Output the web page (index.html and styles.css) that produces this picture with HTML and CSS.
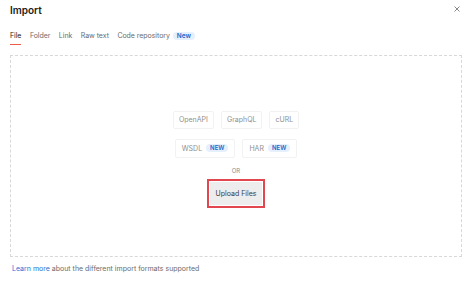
FILE: index.html
```html
<!DOCTYPE html>
<html>
<head>
<meta charset="utf-8">
<link rel="stylesheet" href="styles.css">
</head>
<body>
<div class="dialog">
  <div class="header">
    <div class="title">Import</div>
    <svg class="close" width="6" height="6" viewBox="0 0 6 6"><path d="M0.5 0.5 L5.5 5.5 M5.5 0.5 L0.5 5.5" stroke="#7a7a7a" stroke-width="0.9" fill="none"/></svg>
  </div>
  <div class="tabs">
    <div class="tab active">File</div>
    <div class="tab">Folder</div>
    <div class="tab">Link</div>
    <div class="tab">Raw text</div>
    <div class="tab"><span>Code repository</span><span class="badge">New</span></div>
  </div>
  <div class="dropzone">
    <div class="row">
      <div class="fmt">OpenAPI</div>
      <div class="fmt">GraphQL</div>
      <div class="fmt">cURL</div>
    </div>
    <div class="row row2">
      <div class="fmt"><span>WSDL</span><span class="badge small">NEW</span></div>
      <div class="fmt"><span>HAR</span><span class="badge small">NEW</span></div>
    </div>
    <div class="or">OR</div>
    <div class="highlight"><div class="upload">Upload Files</div></div>
  </div>
  <div class="footer"><span class="link">Learn more</span> about the different import formats supported</div>
</div>
</body>
</html>
```
FILE: styles.css
```css
html, body { margin: 0; padding: 0; background: #ffffff; }
body { font-family: Inter, "Noto Sans", sans-serif; color: #212121; width: 474px; height: 282px; overflow: hidden; }
.dialog { padding: 4px 12px 0 10px; }
.header { display: flex; justify-content: space-between; align-items: flex-start; height: 12px; }
.title { font-size: 10px; line-height: 12px; font-weight: 600; color: #212121; }
.close { margin-top: 2px; margin-right: 2px; }
.tabs { display: flex; gap: 8.5px; margin-top: 15px; align-items: flex-end; }
.tab { font-size: 7px; line-height: 10px; color: #6b6b6b; padding-bottom: 3px; border-bottom: 1.5px solid transparent; display: flex; align-items: center; gap: 3px; letter-spacing: -0.05px; }
.tab.active { color: #212121; border-bottom-color: #ef5b45; }
.badge { display: inline-block; background: #e6f0fc; color: #1d62c7; font-weight: 600; font-size: 6.5px; line-height: 8px; padding: 0 4px; border-radius: 5px; }
.badge.small { font-size: 6px; padding: 0 4px; }
.dropzone { margin-top: 9.5px; border: 1px dashed #d8d8d8; display: flex; flex-direction: column; align-items: center; justify-content: flex-start; padding-top: 55px; box-sizing: border-box; height: 202px; }
.row { display: flex; gap: 7px; }
.row2 { margin-top: 10px; }
.fmt { font-size: 7px; line-height: 16px; color: #8f8f8f; border: 1px solid #f2f2f2; border-radius: 2px; padding: 0 5px; display: flex; align-items: center; gap: 4px; }
.row2 .fmt { line-height: 17px; padding: 0 6px; }
.or { font-size: 6px; line-height: 8px; color: #8c8c8c; margin-top: 9px; }
.highlight { margin-top: 4px; border: 2px solid #e2464f; padding: 1px; }
.upload { background: #ededed; color: #3a3a3a; font-size: 7px; line-height: 23px; padding: 0 6px; border-radius: 1px; }
.footer { font-size: 7px; line-height: 10px; color: #6b6b6b; margin-top: 7px; padding-left: 2px; }
.link { color: #1f6fd6; }
```
